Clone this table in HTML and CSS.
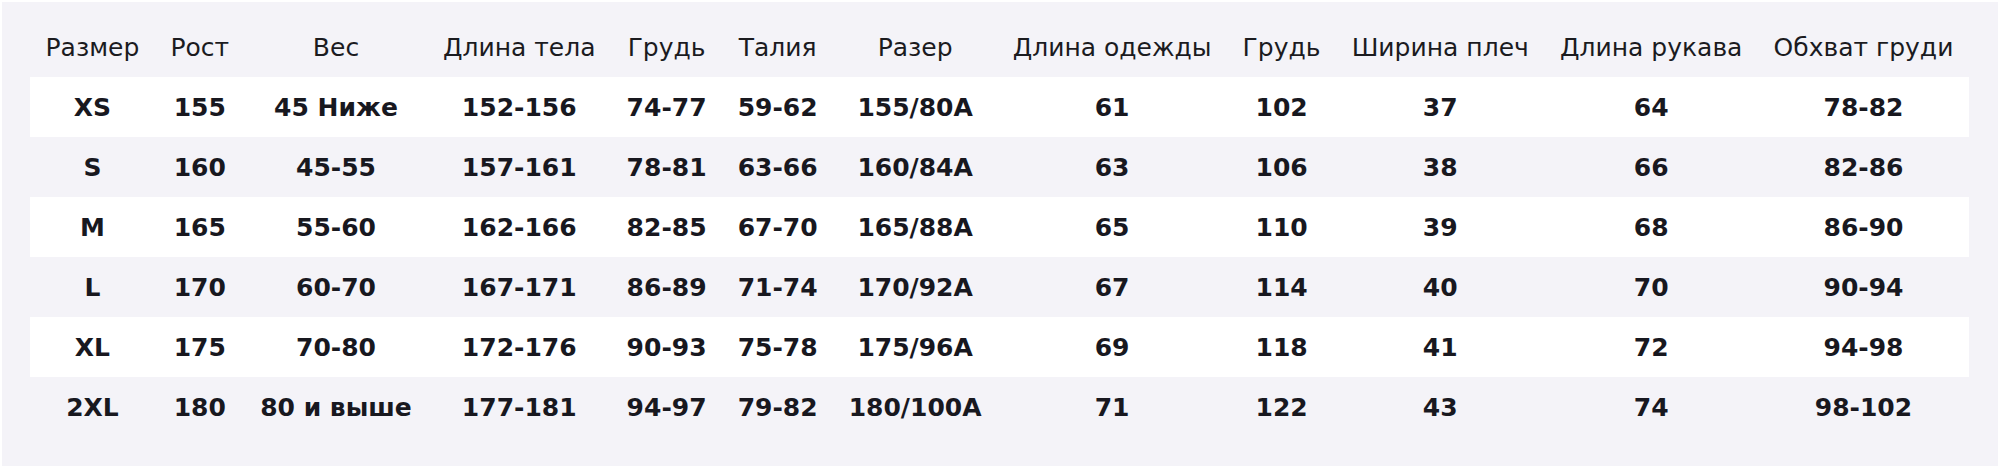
FILE: index.html
```html
<!DOCTYPE html>
<html lang="ru">
<head>
<meta charset="utf-8">
<title>Размеры</title>
<link rel="stylesheet" href="styles.css">
</head>
<body>
<div class="frame">
  <table class="sizes">
    <thead>
      <tr>
        <th>Размер</th><th>Рост</th><th>Вес</th><th>Длина тела</th><th>Грудь</th><th>Талия</th><th>Разер</th><th>Длина одежды</th><th>Грудь</th><th>Ширина плеч</th><th>Длина рукава</th><th>Обхват груди</th>
      </tr>
    </thead>
    <tbody>
      <tr><td>XS</td><td>155</td><td>45 Ниже</td><td>152-156</td><td>74-77</td><td>59-62</td><td>155/80A</td><td>61</td><td>102</td><td>37</td><td>64</td><td>78-82</td></tr>
      <tr><td>S</td><td>160</td><td>45-55</td><td>157-161</td><td>78-81</td><td>63-66</td><td>160/84A</td><td>63</td><td>106</td><td>38</td><td>66</td><td>82-86</td></tr>
      <tr><td>M</td><td>165</td><td>55-60</td><td>162-166</td><td>82-85</td><td>67-70</td><td>165/88A</td><td>65</td><td>110</td><td>39</td><td>68</td><td>86-90</td></tr>
      <tr><td>L</td><td>170</td><td>60-70</td><td>167-171</td><td>86-89</td><td>71-74</td><td>170/92A</td><td>67</td><td>114</td><td>40</td><td>70</td><td>90-94</td></tr>
      <tr><td>XL</td><td>175</td><td>70-80</td><td>172-176</td><td>90-93</td><td>75-78</td><td>175/96A</td><td>69</td><td>118</td><td>41</td><td>72</td><td>94-98</td></tr>
      <tr><td>2XL</td><td>180</td><td>80 и выше</td><td>177-181</td><td>94-97</td><td>79-82</td><td>180/100A</td><td>71</td><td>122</td><td>43</td><td>74</td><td>98-102</td></tr>
    </tbody>
  </table>
</div>
</body>
</html>
```
FILE: styles.css
```css
html, body {
  margin: 0;
  padding: 0;
  background: #ffffff;
}
body {
  padding: 2px;
  font-family: "DejaVu Sans", "Liberation Sans", sans-serif;
}
.frame {
  box-sizing: border-box;
  width: 1996px;
  height: 464px;
  background: #f4f3f8;
  padding: 15px 29px 0 28px;
}
.sizes {
  width: 100%;
  border-collapse: collapse;
  border-spacing: 0;
}
.sizes th,
.sizes td {
  height: 60px;
  padding: 0 15.5px;
  text-align: center;
  vertical-align: middle;
  white-space: nowrap;
  font-size: 25px;
}
.sizes th {
  font-weight: normal;
  color: #1b1b1f;
}
.sizes td {
  font-weight: bold;
  color: #18181f;
}
.sizes tbody tr:nth-child(odd) {
  background: #ffffff;
}
```
